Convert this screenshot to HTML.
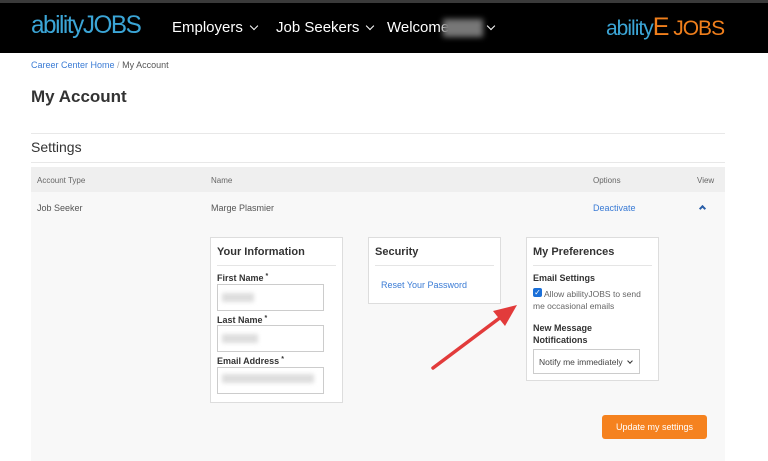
<!DOCTYPE html>
<html><head><meta charset="utf-8"><style>
*{margin:0;padding:0;box-sizing:border-box}
body{width:768px;height:461px;overflow:hidden;background:#fff;font-family:"Liberation Sans",sans-serif;position:relative;color:#333}
.a{position:absolute}
.hdr{left:0;top:0;width:768px;height:53px;background:#000;border-top:3px solid #3a3a3a}
.nav{color:#fff;font-size:15px;top:19px}
.chev{display:inline-block;width:6px;height:6px;border-right:1.5px solid #fff;border-bottom:1.5px solid #fff;transform:rotate(45deg);margin-left:8px;position:relative;top:-3px}
.card{background:#fff;border:1px solid #ddd}
.ct{font-size:11px;font-weight:bold;color:#333}
.lbl{font-size:9px;font-weight:bold;color:#333;line-height:11px}
.st{font-size:7px;position:relative;top:-3px;margin-left:2px}
.inp{background:#fff;border:1px solid #ccc;width:107px;height:27px}
.blur{background:#ddd;filter:blur(2px);height:9px}
</style></head><body>
<div class="a hdr"></div>
<div class="a" style="left:31px;top:11px;font-size:25px;color:#3ba5d6;letter-spacing:-1.5px;font-weight:300;transform:scaleX(0.97);transform-origin:left">abilityJOBS</div>
<div class="a nav" style="left:172px">Employers<span class="chev"></span></div>
<div class="a nav" style="left:276px">Job Seekers<span class="chev"></span></div>
<div class="a nav" style="left:387px">Welcome</div>
<div class="a" style="left:443px;top:19px;width:40px;height:18px;background:#777;filter:blur(3px)"></div>
<div class="a nav" style="left:480px"><span class="chev"></span></div>
<div class="a" style="left:606px;top:13px;font-size:21px;letter-spacing:-1px"><span style="color:#3ba5d6">ability</span><span style="color:#f07f1c;font-size:25px">E</span><span style="color:#f07f1c"> JOBS</span></div>
<div class="a" style="left:31px;top:60px;font-size:9px;color:#3a7bd5">Career Center Home <span style="color:#aaa">/</span> <span style="color:#555">My Account</span></div>
<div class="a" style="left:31px;top:87px;font-size:17px;font-weight:bold;color:#333">My Account</div>
<div class="a" style="left:31px;top:133px;width:694px;height:1px;background:#e8e8e8"></div>
<div class="a" style="left:31px;top:139px;font-size:14px;color:#333">Settings</div>
<div class="a" style="left:31px;top:162px;width:694px;height:1px;background:#e8e8e8"></div>
<div class="a" style="left:31px;top:167px;width:694px;height:25px;background:#efefef"></div>
<div class="a" style="left:31px;top:192px;width:694px;height:269px;background:#f8f8f8"></div>
<div class="a" style="left:37px;top:176px;font-size:8px;color:#666">Account Type</div>
<div class="a" style="left:211px;top:176px;font-size:8px;color:#666">Name</div>
<div class="a" style="left:593px;top:176px;font-size:8px;color:#666">Options</div>
<div class="a" style="left:697px;top:176px;font-size:8px;color:#666">View</div>
<div class="a" style="left:37px;top:203px;font-size:9px;color:#555">Job Seeker</div>
<div class="a" style="left:211px;top:203px;font-size:9px;color:#555">Marge Plasmier</div>
<div class="a" style="left:593px;top:203px;font-size:9px;color:#3a7bd5">Deactivate</div>
<div class="a" style="left:700px;top:206px;width:5px;height:5px;border-left:2px solid #2a5fa8;border-top:2px solid #2a5fa8;transform:rotate(45deg)"></div>

<div class="a card" style="left:210px;top:237px;width:133px;height:166px"></div>
<div class="a ct" style="left:217px;top:246px">Your Information</div>
<div class="a" style="left:217px;top:265px;width:119px;height:1px;background:#e5e5e5"></div>
<div class="a lbl" style="left:217px;top:273px">First Name<span class="st">*</span></div>
<div class="a inp" style="left:217px;top:284px"></div>
<div class="a blur" style="left:222px;top:293px;width:32px"></div>
<div class="a lbl" style="left:217px;top:315px">Last Name<span class="st">*</span></div>
<div class="a inp" style="left:217px;top:325px"></div>
<div class="a blur" style="left:222px;top:334px;width:36px"></div>
<div class="a lbl" style="left:217px;top:356px">Email Address<span class="st">*</span></div>
<div class="a inp" style="left:217px;top:367px"></div>
<div class="a blur" style="left:222px;top:374px;width:92px"></div>

<div class="a card" style="left:368px;top:237px;width:133px;height:67px"></div>
<div class="a ct" style="left:375px;top:246px">Security</div>
<div class="a" style="left:375px;top:265px;width:119px;height:1px;background:#e5e5e5"></div>
<div class="a" style="left:381px;top:280px;font-size:9px;color:#3a7bd5">Reset Your Password</div>

<div class="a card" style="left:526px;top:237px;width:133px;height:144px"></div>
<div class="a ct" style="left:533px;top:246px">My Preferences</div>
<div class="a" style="left:533px;top:265px;width:119px;height:1px;background:#e5e5e5"></div>
<div class="a lbl" style="left:533px;top:273px">Email Settings</div>
<div class="a" style="left:533px;top:288px;width:9px;height:9px;background:#1a6fd8;border-radius:2px;color:#fff;font-size:8px;line-height:9px;text-align:center">✓</div>
<div class="a" style="left:533px;top:288px;width:112px;font-size:8.5px;color:#666;line-height:12px;text-indent:11px">Allow abilityJOBS to send me occasional emails</div>
<div class="a lbl" style="left:533px;top:322px;line-height:12px">New Message<br>Notifications</div>
<div class="a" style="left:533px;top:349px;width:107px;height:25px;background:#fff;border:1px solid #ccc;font-size:8.5px;color:#444;padding:7px 0 0 5px">Notify me immediately <span style="display:inline-block;width:4px;height:4px;border-right:1.2px solid #333;border-bottom:1.2px solid #333;transform:rotate(45deg);margin-left:3px;position:relative;top:-2px"></span></div>

<svg class="a" style="left:425px;top:300px" width="95" height="75"><line x1="8" y1="68" x2="80" y2="14" stroke="#e23b3b" stroke-width="3.5" stroke-linecap="round"/><polygon points="92,5 68,11 80,26" fill="#e23b3b"/></svg>

<div class="a" style="left:602px;top:415px;width:105px;height:24px;background:#f5821f;border-radius:3px;color:#fff;font-size:9px;text-align:center;line-height:24px">Update my settings</div>
</body></html>
